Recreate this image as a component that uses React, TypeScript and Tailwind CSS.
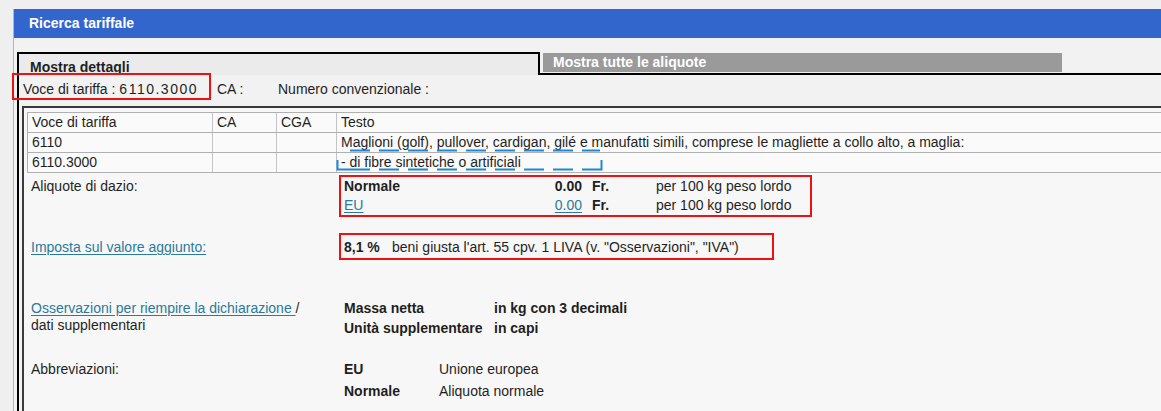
export default function App() {
  const link = 'text-[#2a7a9c] underline underline-offset-2'
  const rows = [
    ['Voce di tariffa', 'CA', 'CGA', 'Testo'],
    ['6110', '', '', 'Maglioni (golf), pullover, cardigan, gilé e manufatti simili, comprese le magliette a collo alto, a maglia:'],
    ['6110.3000', '', '', '- di fibre sintetiche o artificiali'],
  ]

  return (
    <div className="relative h-[411px] w-[1161px] overflow-hidden bg-[#efefef] font-['Liberation_Sans',Arial,sans-serif] text-[14px] text-[#1f1f1f]">
      <div className="ml-[13px] mt-[9px] w-[1180px] border-l border-[#a3b6dc] bg-[#f2f2f2] pb-10">
        {/* header */}
        <div className="flex h-[29px] items-center bg-[#3366cc] pl-[15px] font-bold text-white">Ricerca tariffale</div>

        <div className="pl-[3px] pt-[14px]">
          {/* tabs */}
          <div className="flex h-[23px]">
            <div className="w-[523px] shrink-0 border-l-2 border-r-2 border-t-2 border-solid border-black bg-[#ebebeb] pl-[11px] pt-[5px] font-bold leading-[16px]">
              Mostra dettagli
            </div>
            <div className="grow border-b-2 border-solid border-black pl-[3px] pt-px">
              <div className="h-[19px] w-[519px] bg-[#9a9a9a] pl-[10px] font-bold leading-[19px] text-white">
                Mostra tutte le aliquote
              </div>
            </div>
          </div>

          <div className="border-l-2 border-solid border-black">
            {/* summary line */}
            <div className="flex h-[25px] items-center">
              <div className="-ml-[7px] -mt-[2px] flex h-[27px] w-[199px] shrink-0 items-center border-2 border-[#ee1111] pl-[9px] pt-[5px]">
                Voce di tariffa : <span className="ml-[4px] tracking-[1.5px]">6110.3000</span>
              </div>
              <span className="ml-[6px] w-[61px] pt-[3px]">CA :</span>
              <span className="pt-[3px]">Numero convenzionale :</span>
            </div>

            {/* detail box */}
            <div className="ml-[3px] mt-[6px] border-l-2 border-t-2 border-solid border-[#3a3a3a] bg-[#f7f7f7] pl-[3px] pt-[4px]">
              <div className="border-l border-t border-[#b0b0b0] bg-[#fafafa]">
                {rows.map((r, i) => (
                  <div key={i} className="grid h-[20px] grid-cols-[185px_64px_60px_1fr] border-b border-[#b0b0b0] leading-[19px]">
                    <div className="border-r border-[#c4c4c4] pl-[4px]">{r[0]}</div>
                    <div className="border-r border-[#c4c4c4] pl-[4px]">{r[1]}</div>
                    <div className="border-r border-[#c4c4c4] pl-[4px]">{r[2]}</div>
                    <div className="whitespace-nowrap pl-[4px]">{r[3]}</div>
                  </div>
                ))}
              </div>

              {/* Aliquote di dazio */}
              <div className="mt-[2px] grid grid-cols-[312px_1fr]">
                <div className="pl-[4px] pt-[2px] leading-[19px]">Aliquote di dazio:</div>
                <div className="w-[473px] border-2 border-[#ee1111] pl-[3px] leading-[19px]">
                  <div className="grid grid-cols-[190px_48px_74px_1fr]">
                    <span className="font-bold">Normale</span>
                    <span className="text-right font-bold">0.00</span>
                    <span className="pl-[10px] font-bold">Fr.</span>
                    <span>per 100 kg peso lordo</span>
                  </div>
                  <div className="grid grid-cols-[190px_48px_74px_1fr]">
                    <span><span className={link}>EU</span></span>
                    <span className={`text-right ${link}`}>0.00</span>
                    <span className="pl-[10px] font-bold">Fr.</span>
                    <span>per 100 kg peso lordo</span>
                  </div>
                </div>
              </div>

              {/* IVA */}
              <div className="mt-[16px] grid grid-cols-[312px_1fr]">
                <div className="pl-[4px] pt-[3px] leading-[23px]">
                  <span className={link}>Imposta sul valore aggiunto:</span>
                </div>
                <div className="flex h-[27px] w-[435px] items-center border-2 border-[#ee1111] pl-[3px] pt-[2px]">
                  <span className="w-[48px] font-bold">8,1 %</span>
                  <span>beni giusta l'art. 55 cpv. 1 LIVA (v. "Osservazioni", "IVA")</span>
                </div>
              </div>

              {/* Osservazioni */}
              <div className="mt-[38px] grid grid-cols-[312px_1fr]">
                <div className="pl-[4px] pt-[2px] leading-[17px]">
                  <span className={link}>Osservazioni per riempire la dichiarazione </span> /
                  <br />
                  dati supplementari
                </div>
                <div className="grid grid-cols-[150px_1fr] pl-[5px] font-bold leading-[20px]">
                  <span>Massa netta</span>
                  <span>in kg con 3 decimali</span>
                  <span>Unità supplementare</span>
                  <span>in capi</span>
                </div>
              </div>

              {/* Abbreviazioni */}
              <div className="mt-[20px] grid grid-cols-[312px_1fr] pb-10">
                <div className="pl-[4px] leading-[22px]">Abbreviazioni:</div>
                <div className="grid grid-cols-[95px_1fr] pl-[5px] leading-[22px]">
                  <span className="font-bold">EU</span>
                  <span>Unione europea</span>
                  <span className="font-bold">Normale</span>
                  <span>Aliquota normale</span>
                </div>
              </div>
            </div>
          </div>
        </div>
      </div>

      {/* blue dashed annotation marks */}
      <svg className="pointer-events-none absolute left-0 top-0" width="1161" height="411" viewBox="0 0 1161 411">
        <path d="M350 150.5 H600" stroke="#1e88d8" strokeWidth="2" strokeDasharray="20 9" fill="none" />
        <path d="M337.5 160 V169.5 H350" stroke="#1e88d8" strokeWidth="2" fill="none" />
        <path d="M350 169.5 H590" stroke="#1e88d8" strokeWidth="2" strokeDasharray="20 9" fill="none" />
        <path d="M590 169.5 H601.5 V160" stroke="#1e88d8" strokeWidth="2" fill="none" />
      </svg>
    </div>
  )
}
